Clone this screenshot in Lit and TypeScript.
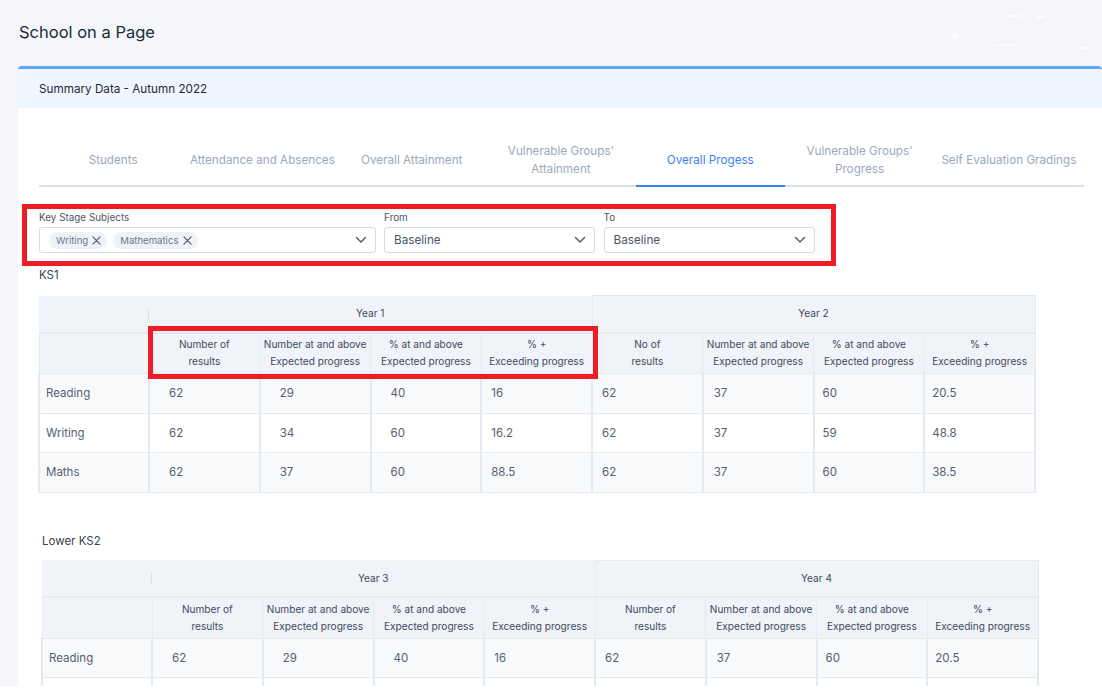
import { LitElement, html, css } from 'lit';
import { customElement } from 'lit/decorators.js';

const TABS = [
  'Students',
  'Attendance and Absences',
  'Overall Attainment',
  "Vulnerable Groups' Attainment",
  'Overall Progess',
  "Vulnerable Groups' Progress",
  'Self Evaluation Gradings',
];
const ACTIVE_TAB = 4;

// faint white scratches on the grey band, top right of the screenshot
const SMEARS = [
  { x: 1004, y: 15, w: 19, h: 2 },
  { x: 1036, y: 15, w: 10, h: 3 },
  { x: 952, y: 34, w: 6, h: 5 },
  { x: 993, y: 44, w: 28, h: 2 },
  { x: 1077, y: 47, w: 13, h: 2 },
];

// the value cells are not evenly indented in the original
const CELL_PAD = ['', '', '', 'p9', 'p9', 'p10', 'p8', 'p7'];

const chevron = html`<svg class="chev" viewBox="0 0 12 8" width="12" height="8" fill="none" stroke="#4b5563" stroke-width="1.4" stroke-linecap="round" stroke-linejoin="round"><path d="M1.5 1.500 6 6l4.500-4.500"/></svg>`;
const cross = html`<svg class="x" viewBox="0 0 10 10" width="9" height="9" fill="none" stroke="#4b5563" stroke-width="1.200" stroke-linecap="round"><path d="M1 1l8 8M9 1l-8 8"/></svg>`;

interface Block {
  title: string;
  years: [string, string];
  firstCol: [string, string];
  firstColRight: [string, string];
  rows: { name: string; cells: string[] }[];
}

const BLOCKS: Block[] = [
  {
    title: 'KS1',
    years: ['Year 1', 'Year 2'],
    firstCol: ['Number of', 'results'],
    firstColRight: ['No of', 'results'],
    rows: [
      { name: 'Reading', cells: ['62', '29', '40', '16', '62', '37', '60', '20.5'] },
      { name: 'Writing', cells: ['62', '34', '60', '16.2', '62', '37', '59', '48.8'] },
      { name: 'Maths', cells: ['62', '37', '60', '88.5', '62', '37', '60', '38.5'] },
    ],
  },
  {
    title: 'Lower KS2',
    years: ['Year 3', 'Year 4'],
    firstCol: ['Number of', 'results'],
    firstColRight: ['Number of', 'results'],
    rows: [
      { name: 'Reading', cells: ['62', '29', '40', '16', '62', '37', '60', '20.5'] },
      { name: 'Writing', cells: ['62', '34', '60', '16.2', '62', '37', '59', '48.8'] },
    ],
  },
];

@customElement('app-root')
export class AppRoot extends LitElement {
  static styles = css`
    :host {
      display: block;
      height: 691px;
      overflow: hidden;
      position: relative;
      background: #f4f6f9;
      font-family: Inter, "Liberation Sans", sans-serif;
      color: #374151;
    }
    h1 {
      margin: 0;
      padding: 21px 0 0 19px;
      height: 66px;
      box-sizing: border-box;
      font-size: 16.500px;
      line-height: 22px;
      font-weight: 400;
      color: #1f2937;
    }
    .card {
      position: relative;
      margin-left: 18px;
      background: #fff;
      border-top: 3px solid #60a5fa;
      border-radius: 4px 4px 0 0;
      height: 625px;
      overflow: hidden;
    }
    .card-head {
      height: 39px;
      padding-left: 21px;
      display: flex;
      align-items: center;
      background: #eff6ff;
      font-size: 11.700px;
      color: #1f2937;
    }
    .tabs {
      display: grid;
      grid-template-columns: repeat(7, 1fr);
      width: 1045px;
      margin: 26px 0 0 21px;
      border-bottom: 2px solid #d9dfe8;
      height: 51px;
    }
    .tab {
      display: flex;
      align-items: center;
      justify-content: center;
      text-align: center;
      padding: 0 16px 0 15px;
      height: 51px;
      box-sizing: border-box;
      font-size: 11.700px;
      line-height: 18px;
      color: #9ca9bb;
    }
    .tab.nowrap { padding: 0 1px 0 0; white-space: nowrap; }
    .tab.active {
      color: #3b82f6;
      border-bottom: 2px solid #3b82f6;
      height: 53px;
    }
    .filters {
      display: grid;
      grid-template-columns: 336.600px 211px 211px;
      column-gap: 8.500px;
      margin: 24px 0 0 21px;
      width: 777px;
    }
    label {
      display: block;
      font-size: 9.900px;
      line-height: 12px;
      color: #4b5563;
      margin-bottom: 4px;
    }
    .select {
      height: 26px;
      box-sizing: border-box;
      border: 1px solid #d5dbe4;
      border-radius: 3px;
      background: #fff;
      display: flex;
      align-items: center;
      justify-content: space-between;
      padding: 0 8px 0 9px;
      font-size: 11.700px;
      color: #4b5563;
    }
    .chips { display: flex; gap: 6px; }
    .chip {
      display: flex;
      align-items: center;
      gap: 4px;
      height: 17px;
      padding: 0 6px 0 7px;
      border-radius: 9px;
      background: #eff3f8;
      font-size: 9.600px;
      color: #6b7688;
    }
    .block-title {
      font-size: 11.500px;
      line-height: 14px;
      color: #374151;
    }
    .title-ks1 { margin: 15px 0 0 21px; }
    .title-ks2 { margin: 41px 0 0 24px; }
    .wrap-ks1 { margin: 13px 0 0 20px; }
    .wrap-ks2 { margin: 12px 0 0 23px; }
    table {
      border-collapse: collapse;
      table-layout: fixed;
      width: 998px;
    }
    col.name { width: 110px; }
    th, td {
      box-sizing: border-box;
      border: 1px solid #e5eaf1;
      font-weight: 400;
      padding: 0;
    }
    th {
      background: #f0f3f8;
      color: #414c5c;
      font-size: 10.100px;
      line-height: 17px;
      text-align: center;
    }
    tr.heads th { height: 41px; }
    tr.years th { height: 37px; border-top: 0; border-left: 0; border-bottom-width: 2px; }
    tr.years th.spacer { border-right: 0; position: relative; }
    tr.years th.spacer::after {
      content: '';
      position: absolute;
      right: 0;
      top: 12px;
      height: 12px;
      width: 1px;
      background: #d9dfe8;
    }
    tr.years th.y2 { border-top: 1px solid #e5eaf1; }
    td {
      height: 39.500px;
      font-size: 11.500px;
      color: #556070;
      padding-left: 19px;
      border-left-width: 2px;
      border-right-width: 2px;
      background: #fff;
    }
    td.name { padding-left: 6px; }
    td.p10 { padding-left: 10px; }
    td.p9 { padding-left: 9px; }
    td.p8 { padding-left: 8px; }
    td.p7 { padding-left: 7px; }
    tbody tr:nth-child(odd) td { background: #f9fafc; }
    .redbox {
      position: absolute;
      box-sizing: border-box;
      border: 5px solid #ee1c25;
      pointer-events: none;
    }
    .filters-box { left: 22px; top: 204px; width: 814px; height: 62px; }
    .head-box { left: 148px; top: 326px; width: 450px; height: 53px; }
    .bottom-cover {
      position: absolute;
      left: 0;
      right: 0;
      top: 686px;
      height: 5px;
      background: #fff;
    }
    .smear {
      position: absolute;
      background: #fff;
      border-radius: 50%;
      opacity: 0.8;
    }
  `;

  private renderTable(b: Block) {
    const heads = (first: [string, string]) => [
      first,
      ['Number at and above', 'Expected progress'],
      ['% at and above', 'Expected progress'],
      ['% +', 'Exceeding progress'],
    ];
    const cols = [...heads(b.firstCol), ...heads(b.firstColRight)];
    return html`
      <table>
        <colgroup><col class="name" />${cols.map(() => html`<col />`)}</colgroup>
        <thead>
          <tr class="years">
            <th class="spacer"></th>
            <th colspan="4">${b.years[0]}</th>
            <th class="y2" colspan="4">${b.years[1]}</th>
          </tr>
          <tr class="heads">
            <th></th>
            ${cols.map((c) => html`<th>${c[0]}<br />${c[1]}</th>`)}
          </tr>
        </thead>
        <tbody>
          ${b.rows.map(
            (r) => html`<tr>
              <td class="name">${r.name}</td>
              ${r.cells.map((v, i) => html`<td class=${CELL_PAD[i]}>${v}</td>`)}
            </tr>`
          )}
        </tbody>
      </table>
    `;
  }

  render() {
    return html`
      <h1>School on a Page</h1>
      <section class="card">
        <div class="card-head">Summary Data - Autumn 2022</div>
        <nav class="tabs">
          ${TABS.map(
            (t, i) => html`<div class="tab ${i === ACTIVE_TAB ? 'active' : ''} ${i === 3 || i === 5 ? '' : 'nowrap'}">${t}</div>`
          )}
        </nav>
        <div class="filters">
          <div>
            <label>Key Stage Subjects</label>
            <div class="select">
              <div class="chips">
                <span class="chip">Writing ${cross}</span>
                <span class="chip">Mathematics ${cross}</span>
              </div>
              ${chevron}
            </div>
          </div>
          <div>
            <label>From</label>
            <div class="select">Baseline ${chevron}</div>
          </div>
          <div>
            <label>To</label>
            <div class="select">Baseline ${chevron}</div>
          </div>
        </div>
        <div class="block-title title-ks1">${BLOCKS[0].title}</div>
        <div class="wrap-ks1">${this.renderTable(BLOCKS[0])}</div>
        <div class="block-title title-ks2">${BLOCKS[1].title}</div>
        <div class="wrap-ks2">${this.renderTable(BLOCKS[1])}</div>
      </section>
      ${SMEARS.map(
        (s) => html`<span class="smear" style="left:${s.x}px;top:${s.y}px;width:${s.w}px;height:${s.h}px"></span>`
      )}
      <div class="redbox filters-box"></div>
      <div class="redbox head-box"></div>
      <div class="bottom-cover"></div>
    `;
  }
}
